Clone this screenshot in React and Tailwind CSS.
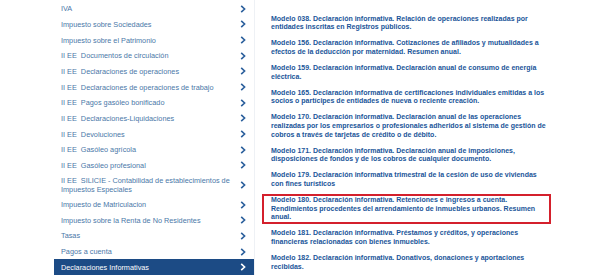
import React from "react";

const Chevron = ({ white }) => (
  <svg width="6" height="8" viewBox="0 0 6 8" className="shrink-0">
    <polyline
      points="1.2,0.8 4.6,4 1.2,7.2"
      fill="none"
      stroke={white ? "#ffffff" : "#2b5f9c"}
      strokeWidth="1.6"
    />
  </svg>
);

const side = [
  ["IVA"],
  ["Impuesto sobre Sociedades"],
  ["Impuesto sobre el Patrimonio"],
  ["II EE  Documentos de circulación"],
  ["II EE  Declaraciones de operaciones"],
  ["II EE  Declaraciones de operaciones de trabajo"],
  ["II EE  Pagos gasóleo bonificado"],
  ["II EE  Declaraciones-Liquidaciones"],
  ["II EE  Devoluciones"],
  ["II EE  Gasóleo agrícola"],
  ["II EE  Gasóleo profesional"],
  ["II EE  SILICIE - Contabilidad de establecimientos de", "Impuestos Especiales"],
  ["Impuesto de Matriculacion"],
  ["Impuesto sobre la Renta de No Residentes"],
  ["Tasas"],
  ["Pagos a cuenta"],
];

const models = [
  ["Modelo 038. Declaración informativa. Relación de operaciones realizadas por", "entidades inscritas en Registros públicos."],
  ["Modelo 156. Declaración informativa. Cotizaciones de afiliados y mutualidades a", "efectos de la deducción por maternidad. Resumen anual."],
  ["Modelo 159. Declaración informativa. Declaración anual de consumo de energía", "eléctrica."],
  ["Modelo 165. Declaración informativa de certificaciones individuales emitidas a los", "socios o partícipes de entidades de nueva o reciente creación."],
  ["Modelo 170. Declaración informativa. Declaración anual de las operaciones", "realizadas por los empresarios o profesionales adheridos al sistema de gestión de", "cobros a través de tarjetas de crédito o de débito."],
  ["Modelo 171. Declaración informativa. Declaración anual de imposiciones,", "disposiciones de fondos y de los cobros de cualquier documento."],
  ["Modelo 179. Declaración informativa trimestral de la cesión de uso de viviendas", "con fines turísticos"],
  ["Modelo 180. Declaración informativa. Retenciones e ingresos a cuenta.", "Rendimientos procedentes del arrendamiento de inmuebles urbanos. Resumen", "anual."],
  ["Modelo 181. Declaración informativa. Préstamos y créditos, y operaciones", "financieras relacionadas con bienes inmuebles."],
  ["Modelo 182. Declaración informativa. Donativos, donaciones y aportaciones", "recibidas."],
];

export default function App() {
  return (
    <div
      className="w-[600px] h-[275px] overflow-hidden bg-white flex"
      style={{ fontFamily: '"Liberation Sans", Arial, sans-serif' }}
    >
      <div className="ml-[54px] w-[201px] shrink-0 border-r border-[#eef1f5] pt-[1px] flex flex-col">
        {side.map((lines, i) => (
          <div
            key={i}
            className={
              "flex items-center justify-between pl-[7px] pr-[8px] text-[7.3px] text-[#4a78a8] " +
              (lines.length > 1 ? "h-[24px] leading-[9px]" : "h-[16px] leading-[9px]")
            }
          >
            <span className="whitespace-pre">
              {lines.map((l, j) => (
                <React.Fragment key={j}>
                  {j > 0 && <br />}
                  {l}
                </React.Fragment>
              ))}
            </span>
            <Chevron />
          </div>
        ))}
        <div className="flex items-center justify-between pl-[7px] pr-[8px] h-[16px] leading-[9px] text-[7.3px] text-white bg-[#1c4b85]">
          <span>Declaraciones Informativas</span>
          <Chevron white />
        </div>
      </div>
      <div className="pl-[16px] pt-[14.7px] flex flex-col gap-[7.5px]">
        {models.map((lines, i) => {
          const boxed = i === 7;
          return (
            <div
              key={i}
              className={
                "text-[7px] font-bold leading-[8.6px] text-[#1a5599] whitespace-nowrap " +
                (boxed
                  ? "-ml-[9px] w-[289px] pl-[7px] border-2 border-[#d4202c] -my-[2px]"
                  : "")
              }
            >
              {lines.map((l, j) => (
                <React.Fragment key={j}>
                  {j > 0 && <br />}
                  {l}
                </React.Fragment>
              ))}
            </div>
          );
        })}
      </div>
    </div>
  );
}
